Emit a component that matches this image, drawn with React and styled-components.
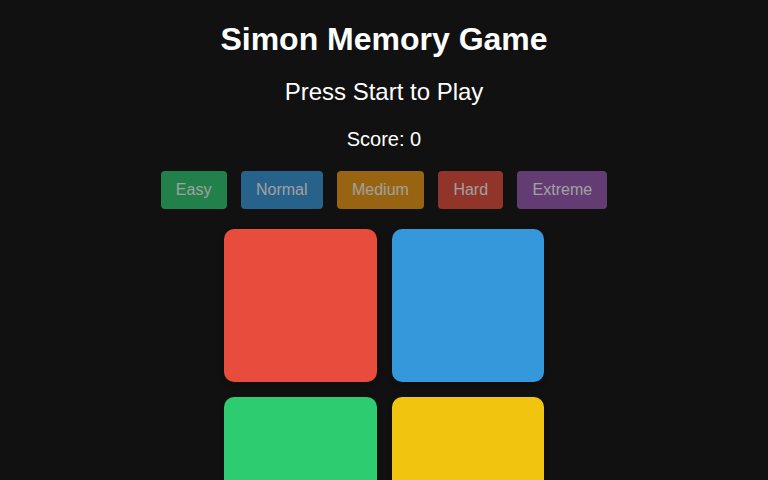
import styled, { createGlobalStyle } from "styled-components";

const GlobalStyle = createGlobalStyle`
  html, body {
    margin: 0;
    padding: 0;
    background: #111111;
    color: #ffffff;
    font-family: "Liberation Sans", Arial, sans-serif;
  }
`;

const Page = styled.div`
  display: flex;
  flex-direction: column;
  align-items: center;
  padding-top: 21px;
  min-height: 100vh;
  box-sizing: border-box;
`;

const Title = styled.h1`
  margin: 0;
  font-size: 32px;
  font-weight: bold;
  line-height: 37px;
`;

const Status = styled.p`
  margin: 20px 0 0;
  font-size: 24px;
  line-height: 28px;
`;

const Score = styled.p`
  margin: 22px 0 0;
  font-size: 20px;
  line-height: 23px;
`;

const Levels = styled.div`
  display: flex;
  gap: 14px;
  margin-top: 20px;
`;

const LevelButton = styled.button`
  height: 38px;
  padding: 0 15.25px;
  border: none;
  border-radius: 4px;
  background: ${(p) => p.$color};
  color: #ffffff;
  font-family: "Liberation Sans", Arial, sans-serif;
  font-size: 16px;
  opacity: 0.6;
  cursor: pointer;
`;

const Board = styled.div`
  display: grid;
  grid-template-columns: 153px 152px;
  grid-auto-rows: 153px;
  gap: 15px;
  margin-top: 20px;
`;

const Pad = styled.div`
  background: ${(p) => p.$color};
  border-radius: 10px;
  box-shadow: 0 2px 6px rgba(0, 0, 0, 0.3);
  cursor: pointer;
`;

const levels = [
  { name: "Easy", color: "#2ecc71" },
  { name: "Normal", color: "#3498db" },
  { name: "Medium", color: "#f39c12" },
  { name: "Hard", color: "#e74c3c" },
  { name: "Extreme", color: "#9b59b6" },
];

const pads = ["#e74c3c", "#3498db", "#2ecc71", "#f1c40f"];

const App = () => {
  return (
    <>
      <GlobalStyle />
      <Page>
        <Title>Simon Memory Game</Title>
        <Status>Press Start to Play</Status>
        <Score>Score: 0</Score>
        <Levels>
          {levels.map((l) => (
            <LevelButton key={l.name} $color={l.color}>
              {l.name}
            </LevelButton>
          ))}
        </Levels>
        <Board>
          {pads.map((c) => (
            <Pad key={c} $color={c} />
          ))}
        </Board>
      </Page>
    </>
  );
};

export default App;
